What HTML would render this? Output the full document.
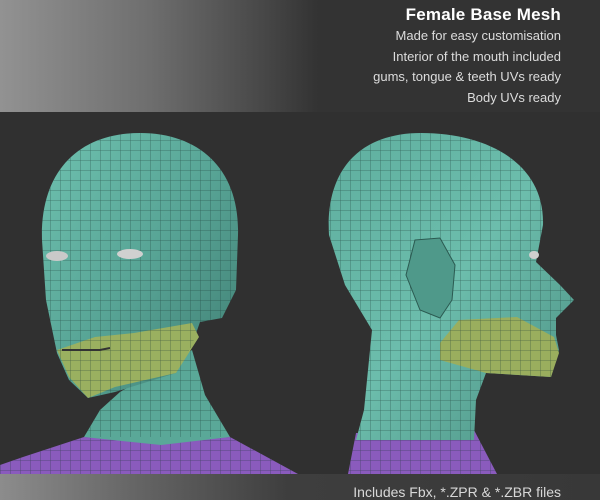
<!DOCTYPE html>
<html><head><meta charset="utf-8"><style>
html,body{margin:0;padding:0}
body{width:600px;height:500px;overflow:hidden;background:#303030;position:relative;font-family:"Liberation Sans",sans-serif}
.top{position:absolute;left:0;top:0;width:600px;height:112px;background:linear-gradient(90deg,#929292 0%,#6e6e6e 25%,#454545 45%,#333 53%,#333 100%)}
.bot{position:absolute;left:0;top:474px;width:600px;height:26px;background:linear-gradient(90deg,#8c8c8c 0%,#666 22%,#3e3e3e 48%,#383838 100%)}
.txt{position:absolute;right:39px;top:4px;text-align:right;color:#e8e8e8}
.t1{font-size:17px;font-weight:bold;color:#fff;letter-spacing:0.2px;line-height:22px}
.l{font-size:13px;line-height:20.5px;color:#dcdcdc}
.b{position:absolute;right:39px;top:484px;font-size:14px;color:#d8d8d8;white-space:nowrap}
svg{position:absolute;left:0;top:0}
</style></head><body>
<div class="top"></div>
<div class="txt"><div class="t1">Female Base Mesh</div>
<div class="l">Made for easy customisation</div>
<div class="l">Interior of the mouth included</div>
<div class="l">gums, tongue &amp; teeth UVs ready</div>
<div class="l">Body UVs ready</div></div>
<svg width="600" height="474" viewBox="0 0 600 474">
<defs>
<pattern id="g" width="10" height="10" patternUnits="userSpaceOnUse"><path d="M0 0H10M0 0V10" stroke="#183530" stroke-width="0.8" opacity="0.6" fill="none"/></pattern>
<linearGradient id="tl" x1="0" y1="0" x2="1" y2="1"><stop offset="0" stop-color="#6fc2b0"/><stop offset="0.5" stop-color="#58a596"/><stop offset="1" stop-color="#3f7d72"/></linearGradient>
<linearGradient id="tr" x1="0" y1="0" x2="1" y2="1"><stop offset="0" stop-color="#5faf9f"/><stop offset="0.5" stop-color="#6cbdac"/><stop offset="1" stop-color="#4b8f82"/></linearGradient>
</defs>
<!-- left purple -->
<path d="M0 474 L0 465 L23 457 L84 437 L161 440 L230 437 L298 474Z" fill="#8a5bbd"/>
<path d="M0 474 L0 465 L23 457 L84 437 L161 440 L230 437 L298 474Z" fill="url(#g)"/>
<!-- left neck -->
<path d="M120 392 L192 350 L205 395 L230 437 L161 445 L84 437 L100 410Z" fill="#5aa898"/>
<!-- left head -->
<path id="lh" d="M42 240 C40 170 80 133 140 133 C200 133 240 170 238 235 L236 290 L222 318 L200 322 L192 345 L176 373 L115 392 L88 398 L69 380 L57 353 L46 300 Z" fill="url(#tl)"/>
<path d="M57 350 L95 337 L134 333 L192 323 L199 337 L176 373 L115 387 L88 398 L69 377Z" fill="#9ab060"/>
<path d="M42 240 C40 170 80 133 140 133 C200 133 240 170 238 235 L236 290 L222 318 L200 322 L192 345 L176 373 L115 392 L88 398 L69 380 L57 353 L46 300 Z M120 392 L192 350 L205 395 L230 437 L84 437 L100 410Z" fill="url(#g)"/>
<ellipse cx="57" cy="256" rx="11" ry="5" fill="#c9c9c9"/>
<ellipse cx="130" cy="254" rx="13" ry="5" fill="#d0d0d0"/>
<path d="M62 350 L100 350 L110 348" stroke="#333" stroke-width="2" fill="none"/>
<!-- right purple -->
<path d="M348 474 L356 433 L474 430 L497 474Z" fill="#8a5bbd"/>
<path d="M348 474 L356 433 L474 430 L497 474Z" fill="url(#g)"/>
<!-- right head -->
<path d="M329 235 C325 170 360 133 421 133 C490 133 545 165 543 225 L536 262 L560 285 L574 300 L556 318 L556 335 L559 350 L551 377 L486 373 L476 400 L474 440 L356 440 L364 410 L372 330 L345 285 Z" fill="url(#tr)"/>
<path d="M440 343 L459 320 L517 317 L554 337 L559 353 L551 377 L486 373 L440 360Z" fill="#9aae5e"/>
<path d="M329 235 C325 170 360 133 421 133 C490 133 545 165 543 225 L536 262 L560 285 L574 300 L556 318 L556 335 L559 350 L551 377 L486 373 L476 400 L474 440 L356 440 L364 410 L372 330 L345 285 Z" fill="url(#g)"/>
<path d="M415 240 L440 238 L455 265 L452 300 L440 318 L420 310 L406 275Z" fill="#4f998a" stroke="#2b5a51" stroke-width="1"/>
<ellipse cx="534" cy="255" rx="5" ry="4" fill="#cfcfcf"/>
</svg>
<div class="bot"></div>
<div class="b">Includes Fbx, *.ZPR &amp; *.ZBR files</div>
</body></html>
